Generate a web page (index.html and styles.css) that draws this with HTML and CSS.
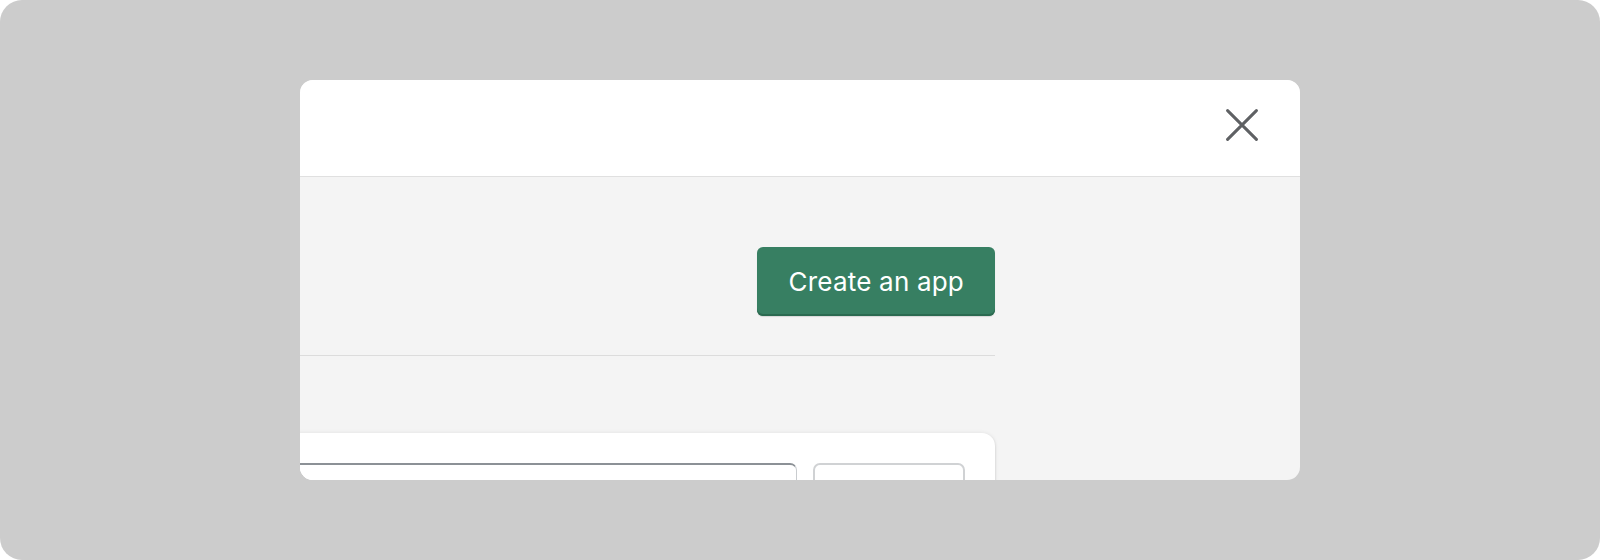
FILE: index.html
```html
<!DOCTYPE html>
<html lang="en">
<head>
<meta charset="utf-8">
<title>Create an app</title>
<link rel="stylesheet" href="styles.css">
</head>
<body>
<div class="backdrop">
  <div class="modal">
    <div class="modal-header">
      <button class="close" aria-label="Close">
        <svg width="32" height="32" viewBox="0 0 32 32" aria-hidden="true">
          <path d="M1.6 1.6 L30.4 30.4 M30.4 1.6 L1.6 30.4" stroke="#5f6164" stroke-width="3" stroke-linecap="round" fill="none"/>
        </svg>
      </button>
    </div>
    <div class="modal-body">
      <div class="column">
        <div class="actions">
          <button class="primary">Create an app</button>
        </div>
        <hr class="divider">
        <div class="card">
          <div class="fields">
            <div class="field field-main"></div>
            <div class="field field-side"></div>
          </div>
        </div>
      </div>
    </div>
  </div>
</div>
</body>
</html>
```
FILE: styles.css
```css
html, body {
  margin: 0;
  padding: 0;
  background: #ffffff;
}
body {
  font-family: Inter, "Noto Sans", "Liberation Sans", sans-serif;
}
.backdrop {
  width: 1600px;
  height: 560px;
  background: #cccccc;
  border-radius: 22px;
  box-sizing: border-box;
  padding-top: 80px;
  display: flex;
  justify-content: center;
  align-items: flex-start;
}
.modal {
  width: 1000px;
  height: 400px;
  background: #f4f4f4;
  border-radius: 13px;
  overflow: hidden;
  display: flex;
  flex-direction: column;
}
.modal-header {
  height: 96px;
  flex-shrink: 0;
  background: #ffffff;
  border-bottom: 1px solid #e0e0e0;
  box-sizing: content-box;
  display: flex;
  justify-content: flex-end;
  align-items: flex-start;
  padding: 29px 42px 0 0;
  height: 67px;
}
.close {
  border: 0;
  padding: 0;
  margin: 0;
  background: none;
  width: 32px;
  height: 32px;
  display: block;
  cursor: pointer;
}
.close svg { display: block; }
.modal-body {
  flex: 1;
  overflow: hidden;
  display: flex;
  justify-content: flex-end;
  padding-right: 305px;
}
.column {
  width: 1000px;
  flex-shrink: 0;
  padding-top: 70px;
}
.actions {
  display: flex;
  justify-content: flex-end;
}
.primary {
  height: 69px;
  padding: 0 31px 0 32px;
  border: 0;
  border-radius: 6px;
  background: #377f62;
  box-shadow: inset 0 -2px 0 #2b6a50, 0 1px 1px rgba(0,0,0,0.12);
  color: #ffffff;
  font-family: Inter, "Noto Sans", "Liberation Sans", sans-serif;
  font-size: 26px;
  font-weight: 400;
  letter-spacing: 0.2px;
  cursor: pointer;
}
.divider {
  border: 0;
  border-top: 1px solid #dcdcdc;
  margin: 39px 0 0 0;
  height: 0;
}
.card {
  margin-top: 77px;
  background: #ffffff;
  border-radius: 13px;
  box-shadow: 0 0 4px rgba(0,0,0,0.08), 1px 1px 2px rgba(0,0,0,0.06);
  padding: 30px 30px 30px 30px;
}
.fields {
  display: flex;
  gap: 16px;
}
.field {
  height: 50px;
  box-sizing: border-box;
  border-radius: 7px;
  background: #ffffff;
}
.field-main {
  flex: 1;
  border: 1px solid #c9cccf;
  border-top: 2px solid #8c9196;
}
.field-side {
  width: 152px;
  border: 2px solid #d0d2d4;
}
```
